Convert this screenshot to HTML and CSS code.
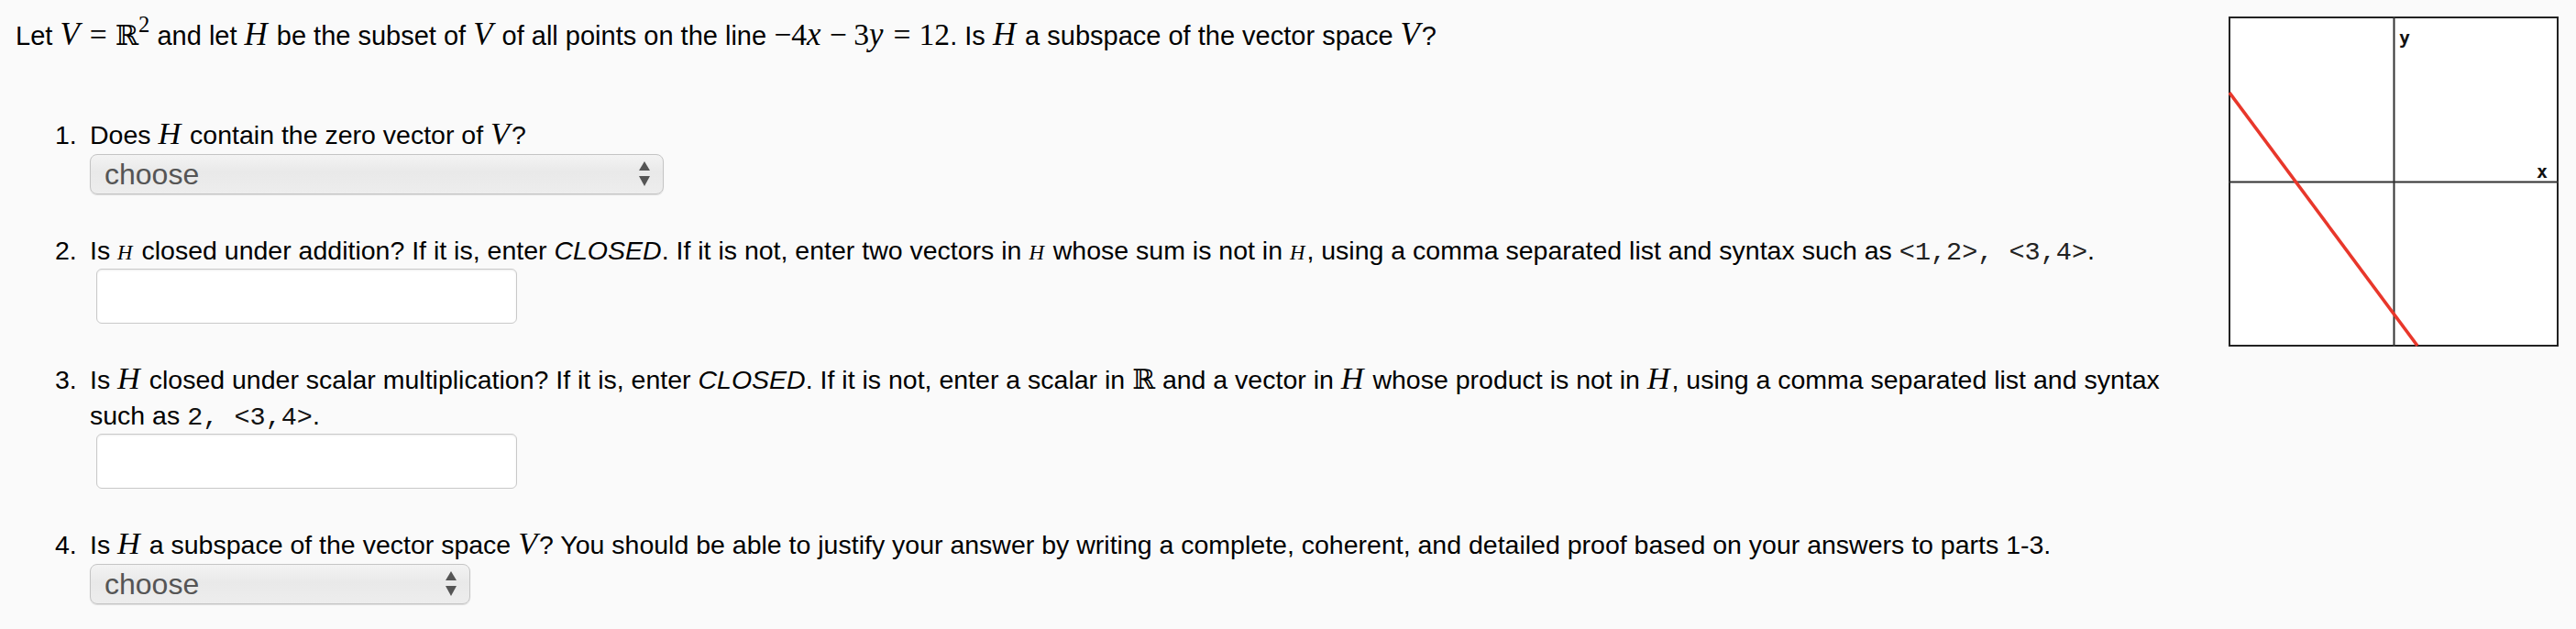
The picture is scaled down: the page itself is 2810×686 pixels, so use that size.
FILE: index.html
```html
<!DOCTYPE html>
<html lang="en">
<head>
<meta charset="utf-8">
<title>Subspace problem</title>
<link rel="stylesheet" href="styles.css">
</head>
<body>
<div class="page">
  <div class="problem">
    <p class="intro">Let <span class="mi">V</span><span class="mo">=</span><span class="ds">ℝ</span><sup class="sup">2</sup> and let <span class="mi">H</span> be the subset of <span class="mi">V</span> of all points on the line <span class="mn">−4</span><span class="mi">x</span><span class="mb">−</span><span class="mn">3</span><span class="mi">y</span><span class="mo">=</span><span class="mn">12</span>. Is <span class="mi">H</span> a subspace of the vector space <span class="mi">V</span>?</p>
    <ol class="parts">
      <li class="part">
        <span class="num">1.</span>
        <div class="body">
          <p class="q">Does <span class="mi">H</span> contain the zero vector of <span class="mi">V</span>?</p>
          <div class="select-wrap wide">
            <select class="select"><option>choose</option></select>
            <svg class="arrows" width="12" height="27" viewBox="0 0 12 27"><path d="M6 0 L12 10 L0 10 Z"/><path d="M0 16 L12 16 L6 27 Z"/></svg>
          </div>
        </div>
      </li>
      <li class="part">
        <span class="num">2.</span>
        <div class="body">
          <p class="q">Is <span class="mi small">H</span> closed under addition? If it is, enter <em>CLOSED</em>. If it is not, enter two vectors in <span class="mi small">H</span> whose sum is not in <span class="mi small">H</span>, using a comma separated list and syntax such as <code class="code light">&lt;1,2&gt;, &lt;3,4&gt;</code>.</p>
          <input class="field" type="text">
        </div>
      </li>
      <li class="part">
        <span class="num">3.</span>
        <div class="body">
          <p class="q">Is <span class="mi">H</span> closed under scalar multiplication? If it is, enter <em>CLOSED</em>. If it is not, enter a scalar in <span class="ds">ℝ</span> and a vector in <span class="mi">H</span> whose product is not in <span class="mi">H</span>, using a comma separated list and syntax such as <code class="code">2, &lt;3,4&gt;</code>.</p>
          <input class="field" type="text">
        </div>
      </li>
      <li class="part">
        <span class="num">4.</span>
        <div class="body">
          <p class="q">Is <span class="mi">H</span> a subspace of the vector space <span class="mi">V</span>? You should be able to justify your answer by writing a complete, coherent, and detailed proof based on your answers to parts 1-3.</p>
          <div class="select-wrap narrow">
            <select class="select"><option>choose</option></select>
            <svg class="arrows" width="12" height="27" viewBox="0 0 12 27"><path d="M6 0 L12 10 L0 10 Z"/><path d="M0 16 L12 16 L6 27 Z"/></svg>
          </div>
        </div>
      </li>
    </ol>
  </div>
  <figure class="graph">
    <svg width="360" height="360" viewBox="0 0 360 360">
      <rect x="1" y="1" width="358" height="358" fill="#fff" stroke="#222" stroke-width="2"/>
      <line x1="180.5" y1="0" x2="180.5" y2="360" stroke="#333" stroke-width="2"/>
      <line x1="0" y1="180.5" x2="360" y2="180.5" stroke="#333" stroke-width="2"/>
      <line x1="1" y1="83" x2="206" y2="359" stroke="#e8372b" stroke-width="3.6"/>
      <text x="186" y="30" class="axis-label">y</text>
      <text x="336" y="176" class="axis-label">x</text>
    </svg>
  </figure>
</div>
</body>
</html>
```
FILE: styles.css
```css
html, body {
  margin: 0;
  padding: 0;
  background: #fafafa;
}

body {
  font-family: "Liberation Sans", Arial, Helvetica, sans-serif;
  color: #000;
}

.page {
  display: flex;
  align-items: flex-start;
  padding: 18px 19px 0 17px;
}

.problem {
  flex: 1;
  min-width: 0;
}

.intro {
  margin: 2px 0 0 0;
  font-size: 29px;
  line-height: 39px;
}

.mi {
  font-family: "Liberation Serif", "Times New Roman", serif;
  font-style: italic;
  font-size: 1.2em;
  line-height: 0;
  padding-right: 2px;
}

.mi.small {
  font-size: 0.8em;
}

.mn {
  font-family: "Liberation Serif", "Times New Roman", serif;
  font-size: 1.16em;
  line-height: 0;
}

.mo {
  font-family: "Liberation Serif", "Times New Roman", serif;
  font-size: 1.16em;
  line-height: 0;
  padding: 0 0.27em;
}

.mb {
  font-family: "Liberation Serif", "Times New Roman", serif;
  font-size: 1.16em;
  line-height: 0;
  padding: 0 0.22em;
}

.ds {
  font-family: "DejaVu Serif", serif;
  font-size: 1.05em;
  line-height: 0;
}

.sup {
  font-family: "Liberation Serif", "Times New Roman", serif;
  font-size: 0.85em;
  line-height: 0;
  vertical-align: 0.55em;
}

.parts {
  list-style: none;
  margin: 69px 0 0 0;
  padding: 0;
}

.part {
  display: flex;
  margin-bottom: 42px;
}

.num {
  width: 38px;
  margin-left: 43px;
  flex: none;
  font-size: 28.5px;
  line-height: 39px;
}

.body {
  flex: 1;
  min-width: 0;
}

.q {
  margin: 0;
  font-size: 28.5px;
  line-height: 39px;
}

.q em {
  font-style: italic;
}

.code {
  font-family: "Liberation Mono", "Courier New", monospace;
  font-size: 28.5px;
  white-space: pre;
  color: #111;
}

.code.light {
  color: #222;
}

.select-wrap {
  position: relative;
  margin-top: 1px;
  height: 44px;
}

.select-wrap.wide {
  width: 626px;
}

.select-wrap.narrow {
  width: 415px;
}

.select {
  -webkit-appearance: none;
  appearance: none;
  box-sizing: border-box;
  width: 100%;
  height: 44px;
  margin: 0;
  padding: 0 40px 0 15px;
  border: 1px solid #c4c4c4;
  border-radius: 8px;
  background: linear-gradient(#f3f3f3 0%, #e9e9e9 45%, #ededed 100%);
  box-shadow: 0 1px 1px rgba(0, 0, 0, 0.12);
  font-family: "Liberation Sans", Arial, sans-serif;
  font-size: 32px;
  color: #555;
  line-height: 42px;
}

.arrows {
  position: absolute;
  right: 15px;
  top: 8px;
  fill: #555;
}

.field {
  display: block;
  box-sizing: border-box;
  width: 459px;
  height: 60px;
  margin: -2px 0 0 7px;
  padding: 0 10px;
  border: 1px solid #c9c9c9;
  border-radius: 6px;
  background: #fff;
  box-shadow: inset 0 1px 2px rgba(0, 0, 0, 0.08);
  font-family: "Liberation Sans", Arial, sans-serif;
  font-size: 28px;
}

.graph {
  flex: none;
  width: 360px;
  height: 360px;
  margin: 0 0 0 44px;
}

.graph svg {
  display: block;
}

.axis-label {
  font-family: "DejaVu Sans Mono", monospace;
  font-weight: bold;
  font-size: 20px;
  fill: #111;
}
```
